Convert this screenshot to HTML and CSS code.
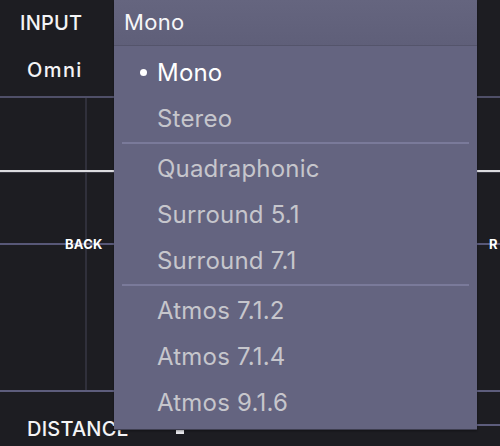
FILE: index.html
```html
<!DOCTYPE html>
<html>
<head>
<meta charset="utf-8">
<link rel="stylesheet" href="styles.css">
</head>
<body>
<div class="panel">
  <div class="row row-input"><span class="label">INPUT</span></div>
  <div class="row row-mode"><span class="mode">Omni</span></div>
  <div class="rule rule-top"></div>
  <div class="stage">
    <div class="vline"></div>
    <div class="hline hline-white"></div>
    <div class="hline hline-purple"></div>
    <span class="tag tag-back">BACK</span>
    <span class="tag tag-right">R</span>
  </div>
  <div class="rule rule-bottom"></div>
  <div class="row row-distance">
    <span class="label">DISTANCE</span>
    <div class="slider">
      <div class="track"></div>
      <div class="thumb"></div>
    </div>
  </div>

  <div class="menu">
    <div class="menu-head">Mono</div>
    <ul class="menu-list">
      <li class="item selected">Mono</li>
      <li class="item">Stereo</li>
      <li class="sep"></li>
      <li class="item">Quadraphonic</li>
      <li class="item">Surround 5.1</li>
      <li class="item">Surround 7.1</li>
      <li class="sep"></li>
      <li class="item">Atmos 7.1.2</li>
      <li class="item">Atmos 7.1.4</li>
      <li class="item">Atmos 9.1.6</li>
    </ul>
  </div>
</div>
</body>
</html>
```

FILE: styles.css
```css
* { box-sizing: border-box; }
html, body {
  margin: 0;
  padding: 0;
  background: #1d1d22;
  width: 500px;
  height: 446px;
  overflow: hidden;
}
body {
  font-family: "Inter", "Open Sans", "DejaVu Sans", sans-serif;
  color: #ffffff;
}
.panel {
  position: relative;
  width: 500px;
  height: 446px;
  display: flex;
  flex-direction: column;
}
.row {
  display: flex;
  align-items: center;
}
.row-input {
  height: 46px;
  padding-left: 20px;
}
.label {
  font-size: 20px;
  font-weight: 500;
  letter-spacing: 0.2px;
  color: #f4f4f6;
}
.row-mode {
  height: 50px;
  padding-left: 27px;
  padding-bottom: 2px;
}
.mode {
  font-size: 20px;
  font-weight: 500;
  letter-spacing: 1.4px;
  color: #f4f4f6;
}
.rule {
  height: 2px;
  flex: none;
}
.rule-top { background: #4f4f68; }
.rule-bottom { background: #5d5d7c; }
.stage {
  position: relative;
  height: 292px;
  flex: none;
  overflow: hidden;
}
.vline {
  position: absolute;
  left: 85px;
  top: 0;
  bottom: 0;
  width: 2px;
  background: #30303b;
}
.hline {
  position: absolute;
  left: 0;
  right: 0;
  height: 2px;
}
.hline-white {
  top: 72px;
  background: #dcdce0;
  box-shadow: 0 1px 0 #3a3a44;
}
.hline-purple {
  top: 145px;
  background: #585878;
}
.tag {
  position: absolute;
  font-size: 13px;
  font-weight: 700;
  color: #ffffff;
  line-height: 14px;
  top: 139px;
}
.tag-back { left: 65px; letter-spacing: 0.2px; }
.tag-right { left: 489px; }
.row-distance {
  flex: 1;
  padding-left: 27px;
  position: relative;
  align-items: flex-start;
  padding-top: 25px;
}
.slider {
  position: absolute;
  left: 150px;
  right: 0;
  top: 24px;
  height: 18px;
}
.track {
  position: absolute;
  left: 0;
  right: 0;
  top: 8px;
  height: 2px;
  background: #5d5d7c;
}
.thumb {
  position: absolute;
  left: 26px;
  top: 0;
  width: 8px;
  height: 18px;
  background: #e8e8ec;
}
.menu {
  position: absolute;
  left: 114px;
  top: 0;
  width: 363px;
  height: 429px;
  background: #646480;
  box-shadow: 0 1px 0 #3e3e50, 0 2px 2px rgba(0,0,0,0.35);
  display: flex;
  flex-direction: column;
}
.menu-head {
  height: 46px;
  flex: none;
  padding-left: 10px;
  display: flex;
  align-items: center;
  font-size: 22px;
  font-weight: 400;
  letter-spacing: 0.3px;
  color: #f6f6f8;
  background: linear-gradient(#65657f, #5f5f79);
  border-bottom: 1px solid #54546b;
  padding-bottom: 2px;
}
.menu-list {
  list-style: none;
  margin: 0;
  padding: 3px 0 4px 0;
}
.item {
  position: relative;
  height: 46px;
  display: flex;
  align-items: center;
  padding-left: 43px;
  font-size: 24px;
  font-weight: 400;
  color: #c6c6cc;
  letter-spacing: 0.2px;
}
.item.selected {
  color: #ffffff;
}
.item.selected::before {
  content: "";
  position: absolute;
  left: 26px;
  top: 20px;
  width: 7px;
  height: 7px;
  border-radius: 50%;
  background: #ffffff;
}
.sep {
  height: 2px;
  margin: 1px 8px;
  background: #7a7a9a;
}
```
